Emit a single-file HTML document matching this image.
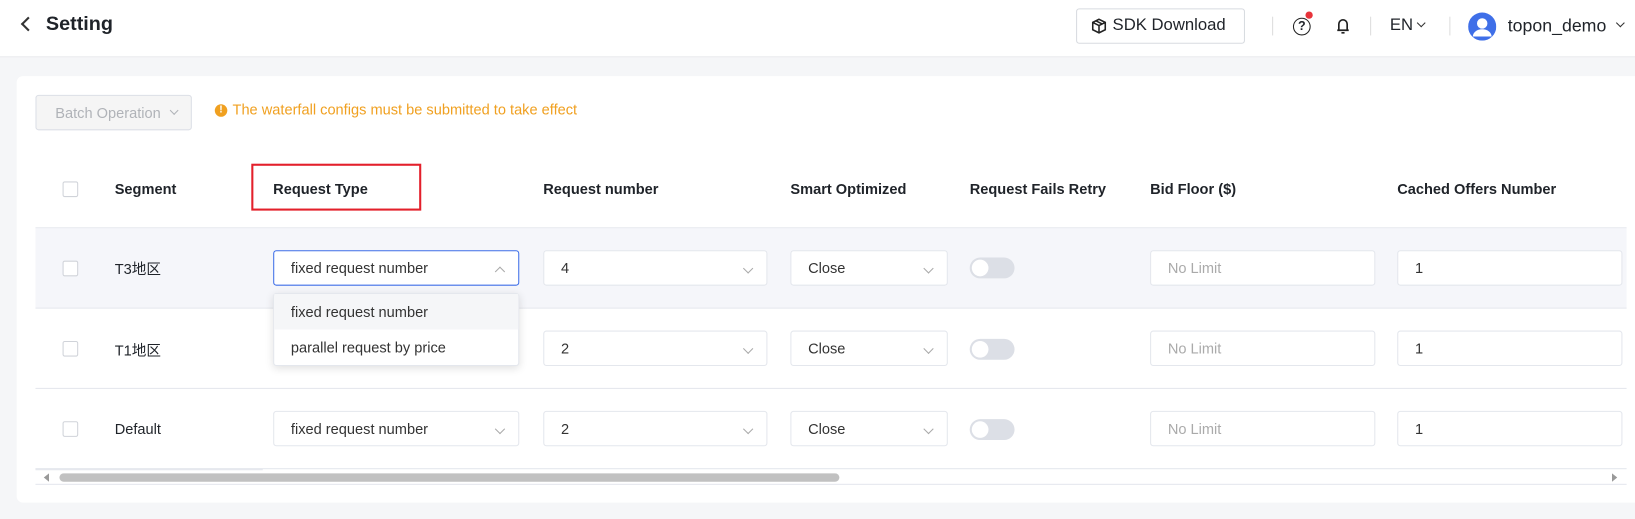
<!DOCTYPE html>
<html><head><meta charset="utf-8"><style>
*{box-sizing:border-box;margin:0;padding:0}
body{width:1635px;height:519px;background:#f5f6f8;font-family:"Liberation Sans","Noto Sans CJK SC",sans-serif;position:relative;overflow:hidden;color:#1f2329}
#w{position:absolute;left:0;top:0;width:1568px;height:498px;transform:scale(1.0427);transform-origin:0 0}
.abs{position:absolute}
.hdr{left:0;top:0;width:1600px;height:55px;background:#fff;border-bottom:1px solid #e8e9ec}
.card{left:16px;top:73px;width:1600px;height:409px;background:#fff;border-radius:6px}
.th{font-size:14px;font-weight:bold;top:173px;color:#1f2329}
.line{height:1px;background:#e4e7ed;left:34px;width:1526px}
.cb{width:15px;height:15px;border:1px solid #d0d3d9;border-radius:2px;background:#fff;left:60px}
.sel{height:34px;border:1px solid #e4e7ed;border-radius:3px;background:#fff;font-size:14px;padding-left:16px;line-height:32px;color:#333}
.sel .ar{position:absolute;right:14px;top:13px;width:7px;height:7px;border-right:1px solid #aaa;border-bottom:1px solid #aaa;transform:rotate(45deg)}
.tg{width:43px;height:20px;border-radius:10px;background:#dcdfe6;left:930px}
.tg:after{content:"";position:absolute;left:2px;top:2px;width:16px;height:16px;border-radius:50%;background:#fff}
.ph{color:#aaa}
.txt{font-size:14px;color:#1f2329}
</style></head><body><div id="w">
<div class="abs hdr"></div>
<div class="abs" style="left:22px;top:18px;width:10px;height:10px;border-left:2px solid #333;border-bottom:2px solid #333;transform:rotate(45deg)"></div>
<div class="abs" style="left:44px;top:13px;font-size:19px;font-weight:bold">Setting</div>
<div class="abs" style="left:1032px;top:8px;width:162px;height:34px;border:1px solid #d8dbe0;border-radius:3px;font-size:16px;line-height:32px;padding-left:34px">SDK Download</div>
<svg class="abs" style="left:1046px;top:17px" width="16" height="16" viewBox="0 0 16 16" fill="none" stroke="#222" stroke-width="1.5"><path d="M8 1.5 14 4.5v7L8 14.5 2 11.5v-7zM2 4.5 8 7.5l6-3M8 7.5v7M5 3l6 3"/></svg>
<div class="abs" style="left:1220px;top:16px;width:1px;height:18px;background:#ddd"></div>
<div class="abs" style="left:1240px;top:17px;width:17px;height:17px;border:1.6px solid #222;border-radius:50%;font-size:12px;font-weight:bold;text-align:center;line-height:14px">?</div>
<div class="abs" style="left:1252px;top:11px;width:7px;height:7px;background:#e8343b;border-radius:50%"></div>
<svg class="abs" style="left:1280px;top:16px" width="16" height="18" viewBox="0 0 16 18" fill="none" stroke="#222" stroke-width="1.6"><path d="M4 13V7a4 4 0 0 1 8 0v6M2.5 13h11M6.5 15.5h3"/></svg>
<div class="abs" style="left:1314px;top:16px;width:1px;height:18px;background:#ddd"></div>
<div class="abs" style="left:1333px;top:16px;font-size:16px">EN</div>
<div class="abs" style="left:1360px;top:19px;width:6px;height:6px;border-right:1.5px solid #333;border-bottom:1.5px solid #333;transform:rotate(45deg)"></div>
<div class="abs" style="left:1390px;top:16px;width:1px;height:18px;background:#ddd"></div>
<svg class="abs" style="left:1408px;top:12px" width="27" height="27" viewBox="0 0 27 27"><circle cx="13.5" cy="13.5" r="13.5" fill="#3f6fe8"/><circle cx="13.5" cy="10.5" r="5" fill="#fff"/><path d="M4.5 23a9 7 0 0 1 18 0z" fill="#fff"/></svg>
<div class="abs" style="left:1446px;top:15px;font-size:17px">topon_demo</div>
<div class="abs" style="left:1551px;top:19px;width:6px;height:6px;border-right:1.5px solid #333;border-bottom:1.5px solid #333;transform:rotate(45deg)"></div>

<div class="abs card"></div>
<div class="abs" style="left:34px;top:91px;width:150px;height:34px;background:#f5f5f5;border:1px solid #dcdfe6;border-radius:3px;font-size:14px;color:#b0b3b8;line-height:32px;padding-left:18px">Batch Operation</div>
<div class="abs" style="left:164px;top:103px;width:6px;height:6px;border-right:1px solid #b0b3b8;border-bottom:1px solid #b0b3b8;transform:rotate(45deg)"></div>
<div class="abs" style="left:206px;top:100px;width:12px;height:12px;border-radius:50%;background:#f0a020;color:#fff;font-size:10px;font-weight:bold;text-align:center;line-height:12px">!</div>
<div class="abs" style="left:223px;top:97px;font-size:14px;color:#f0a020">The waterfall configs must be submitted to take effect</div>

<div class="abs cb" style="top:174px"></div>
<div class="abs th" style="left:110px">Segment</div>
<div class="abs th" style="left:262px">Request Type</div>
<div class="abs th" style="left:521px">Request number</div>
<div class="abs th" style="left:758px">Smart Optimized</div>
<div class="abs th" style="left:930px">Request Fails Retry</div>
<div class="abs th" style="left:1103px">Bid Floor ($)</div>
<div class="abs th" style="left:1340px">Cached Offers Number</div>
<div class="abs" style="left:241px;top:157px;width:163px;height:45px;border:2px solid #e3202b"></div>

<div class="abs line" style="top:218px"></div>
<div class="abs" style="left:34px;top:219px;width:1526px;height:76px;background:#f5f6fa"></div>
<div class="abs line" style="top:295px"></div>
<div class="abs line" style="top:372px"></div>
<div class="abs line" style="top:449px"></div>
<div class="abs line" style="top:464px"></div>

<div class="abs cb" style="top:250px"></div><div class="abs txt" style="left:110px;top:248px">T3地区</div>
<div class="abs cb" style="top:327px"></div><div class="abs txt" style="left:110px;top:326px">T1地区</div>
<div class="abs cb" style="top:404px"></div><div class="abs txt" style="left:110px;top:403px">Default</div>

<div class="abs sel" style="left:262px;top:240px;width:236px;border-color:#3f6fe8">fixed request number<div class="ar" style="top:16px;transform:rotate(225deg)"></div></div>
<div class="abs sel" style="left:262px;top:394px;width:236px">fixed request number<div class="ar"></div></div>

<div class="abs sel" style="left:521px;top:240px;width:215px">4<div class="ar"></div></div>
<div class="abs sel" style="left:521px;top:317px;width:215px">2<div class="ar"></div></div>
<div class="abs sel" style="left:521px;top:394px;width:215px">2<div class="ar"></div></div>

<div class="abs sel" style="left:758px;top:240px;width:151px">Close<div class="ar"></div></div>
<div class="abs sel" style="left:758px;top:317px;width:151px">Close<div class="ar"></div></div>
<div class="abs sel" style="left:758px;top:394px;width:151px">Close<div class="ar"></div></div>

<div class="abs tg" style="top:247px"></div>
<div class="abs tg" style="top:325px"></div>
<div class="abs tg" style="top:402px"></div>

<div class="abs sel ph" style="left:1103px;top:240px;width:216px">No Limit</div>
<div class="abs sel ph" style="left:1103px;top:317px;width:216px">No Limit</div>
<div class="abs sel ph" style="left:1103px;top:394px;width:216px">No Limit</div>
<div class="abs sel" style="left:1340px;top:240px;width:216px">1</div>
<div class="abs sel" style="left:1340px;top:317px;width:216px">1</div>
<div class="abs sel" style="left:1340px;top:394px;width:216px">1</div>

<div class="abs" style="left:262px;top:281px;width:236px;height:70px;background:#fff;border:1px solid #e4e7ed;border-radius:3px;box-shadow:0 2px 8px rgba(0,0,0,.12)">
<div style="height:34px;background:#f5f6f8;font-size:14px;line-height:34px;padding-left:16px;color:#333">fixed request number</div>
<div style="height:34px;font-size:14px;line-height:34px;padding-left:16px;color:#333">parallel request by price</div>
</div>

<div class="abs" style="left:34px;top:449px;width:218px;height:2px;background:#e6e8ee"></div>
<div class="abs" style="left:42px;top:454px;width:0;height:0;border-top:4px solid transparent;border-bottom:4px solid transparent;border-right:5px solid #999"></div>
<div class="abs" style="left:57px;top:454px;width:748px;height:8px;border-radius:4px;background:#c1c1c1"></div>
<div class="abs" style="left:1546px;top:454px;width:0;height:0;border-top:4px solid transparent;border-bottom:4px solid transparent;border-left:5px solid #999"></div>
</div></body></html>
